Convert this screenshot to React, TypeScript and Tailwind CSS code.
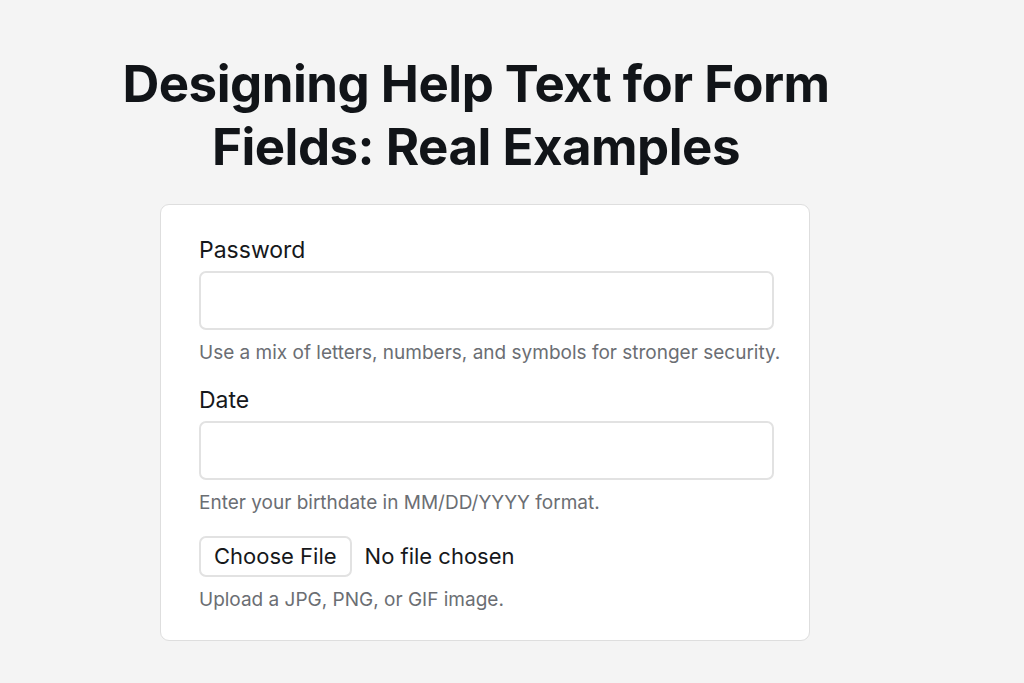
export default function App() {
  return (
    <main className="min-h-screen bg-[#f4f4f4] font-['Inter',sans-serif] text-[#111418]">
      <div className="flex flex-col items-center pt-[52px] pr-[72px]">
        <h1 className="text-center text-[51px] font-bold leading-[63px] tracking-[-0.5px]">
          Designing Help Text for Form
          <br />
          Fields: Real Examples
        </h1>
      </div>
      <div className="ml-[160px] mt-[26px] w-[650px] rounded-[9px] border border-[#dedede] bg-white px-[38px] pt-[30px] pb-[26px]">
        <label className="block text-[23px] leading-[30px] text-[#16181b]">Password</label>
        <div className="mt-[6px] h-[59px] w-[575px] rounded-[7px] border-2 border-[#e2e2e2] bg-white" />
        <p className="mt-[9px] whitespace-nowrap text-[19px] leading-[28px] text-[#6b6e73]">
          Use a mix of letters, numbers, and symbols for stronger security.
        </p>
        <label className="mt-[18px] block text-[23px] leading-[30px] text-[#16181b]">Date</label>
        <div className="mt-[6px] h-[59px] w-[575px] rounded-[7px] border-2 border-[#e2e2e2] bg-white" />
        <p className="mt-[9px] whitespace-nowrap text-[19px] leading-[28px] text-[#6b6e73]">
          Enter your birthdate in MM/DD/YYYY format.
        </p>
        <div className="mt-[19px] flex items-center gap-[13px]">
          <button className="h-[41px] rounded-[7px] border-2 border-[#e2e2e2] bg-white px-[13px] text-[22px] text-[#16181b]">
            Choose File
          </button>
          <span className="text-[22px] text-[#16181b]">No file chosen</span>
        </div>
        <p className="mt-[9px] whitespace-nowrap text-[19px] leading-[28px] text-[#6b6e73]">
          Upload a JPG, PNG, or GIF image.
        </p>
      </div>
    </main>
  );
}
